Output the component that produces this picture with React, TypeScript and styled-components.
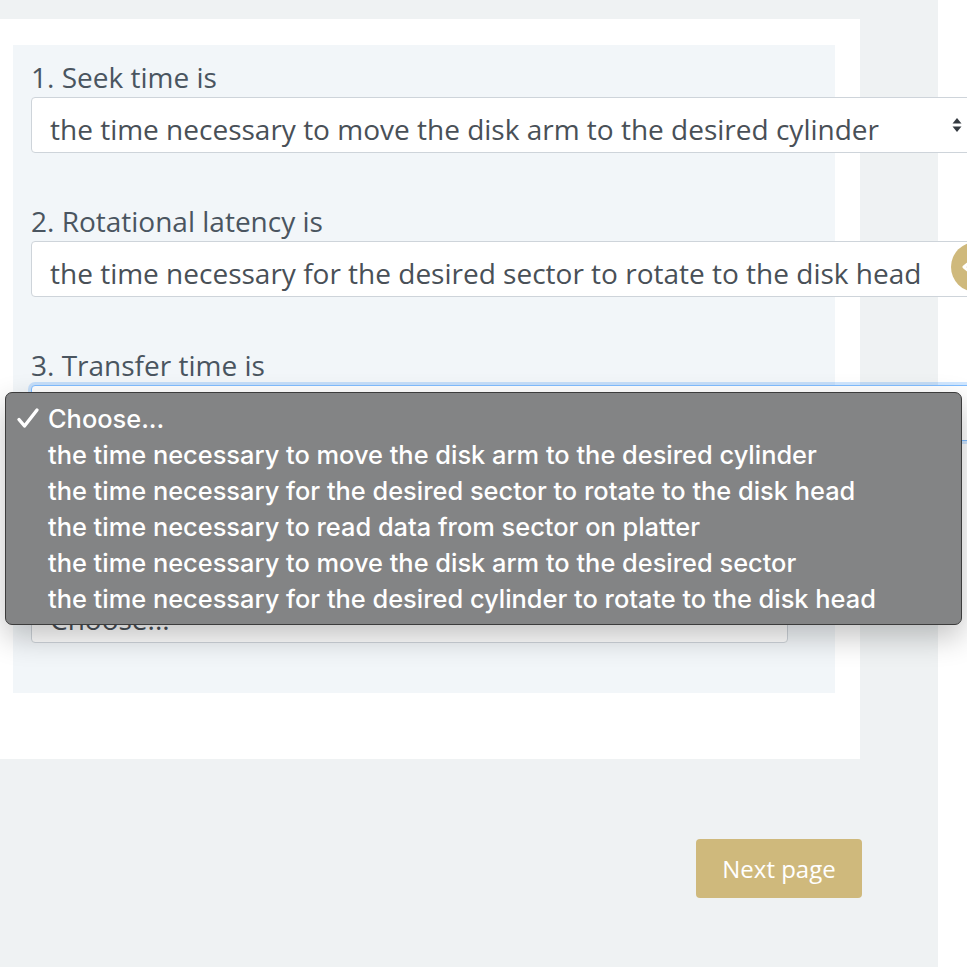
import React from "react";
import styled, { createGlobalStyle } from "styled-components";

const GlobalStyle = createGlobalStyle`
  html, body {
    margin: 0;
    padding: 0;
    background: #ffffff;
  }
  * {
    box-sizing: border-box;
  }
`;

const questions = [
  {
    label: "1. Seek time is",
    value: "the time necessary to move the disk arm to the desired cylinder",
  },
  {
    label: "2. Rotational latency is",
    value: "the time necessary for the desired sector to rotate to the disk head",
  },
  {
    label: "3. Transfer time is",
    value: "Choose...",
    focused: true,
  },
];

const options = [
  "Choose...",
  "the time necessary to move the disk arm to the desired cylinder",
  "the time necessary for the desired sector to rotate to the disk head",
  "the time necessary to read data from sector on platter",
  "the time necessary to move the disk arm to the desired sector",
  "the time necessary for the desired cylinder to rotate to the disk head",
];

const Arrows = () => (
  <svg width="10" height="16" viewBox="0 0 10 16">
    <path d="M5 1 L9.5 6.5 L0.5 6.5 Z" fill="#343a40" />
    <path d="M5 15 L9.5 9.5 L0.5 9.5 Z" fill="#343a40" />
  </svg>
);

const Check = () => (
  <svg width="24" height="24" viewBox="0 0 24 24">
    <path
      d="M3 13.5 L8.5 20 L21 4"
      fill="none"
      stroke="#ffffff"
      strokeWidth="3.4"
      strokeLinecap="round"
      strokeLinejoin="round"
    />
  </svg>
);

const App = () => {
  return (
    <>
      <GlobalStyle />
      <Screen>
        <Main>
          <Card>
            <Panel>
              {questions.map((q) => (
                <Group key={q.label}>
                  <Label>{q.label}</Label>
                  <SelectBox $width={950} $focused={q.focused}>
                    <span>{q.value}</span>
                    <Arrows />
                  </SelectBox>
                </Group>
              ))}
              <Group $extra={58}>
                <Label>4. Access time is</Label>
                <SelectBox $width={757}>
                  <span>Choose...</span>
                  <Arrows />
                </SelectBox>
              </Group>
            </Panel>
          </Card>
          <Actions>
            <NextButton>Next page</NextButton>
          </Actions>
        </Main>

        <Dropdown>
          {options.map((o, i) => (
            <Option key={o}>
              <CheckSlot>{i === 0 && <Check />}</CheckSlot>
              {o}
            </Option>
          ))}
        </Dropdown>

        <ToggleBubble>
          <svg width="20" height="20" viewBox="0 0 20 20">
            <path
              d="M14 4 L7 10 L14 16"
              fill="none"
              stroke="#ffffff"
              strokeWidth="3"
              strokeLinecap="round"
              strokeLinejoin="round"
            />
          </svg>
        </ToggleBubble>
      </Screen>
    </>
  );
};

export default App;

const Screen = styled.div`
  position: relative;
  width: 967px;
  height: 967px;
  overflow: hidden;
  background: #ffffff;
  font-family: "Open Sans", "Liberation Sans", sans-serif;
`;

const Main = styled.div`
  width: 938px;
  height: 967px;
  background: #eff2f3;
  padding-top: 19px;
`;

const Card = styled.div`
  width: 860px;
  background: #ffffff;
  padding: 26px 25px 66px 13px;
`;

const Panel = styled.div`
  display: flex;
  flex-direction: column;
  gap: 46px;
  background: #f2f6f9;
  padding: 10px 0 0 18px;
  height: 648px;
`;

const Group = styled.div<{ $extra?: number }>`
  display: flex;
  flex-direction: column;
  margin-top: ${(p) => p.$extra ?? 0}px;
`;

const Label = styled.label`
  font-size: 28px;
  line-height: 44px;
  color: #4a5560;
  margin-bottom: -2px;
`;

const SelectBox = styled.div<{ $width: number; $focused?: boolean }>`
  display: flex;
  align-items: center;
  justify-content: space-between;
  flex: none;
  width: ${(p) => p.$width}px;
  height: 56px;
  padding: 0 18px 0 18px;
  background: #ffffff;
  border: 1px solid ${(p) => (p.$focused ? "#80bdff" : "#ced4da")};
  border-radius: 4px;
  box-shadow: ${(p) =>
    p.$focused ? "0 0 0 3px rgba(0, 123, 255, 0.18)" : "none"};
  color: #495057;
  font-size: 28px;
  span {
    white-space: nowrap;
    margin-top: 8px;
  }
`;

const Actions = styled.div`
  width: 862px;
  display: flex;
  justify-content: flex-end;
  margin-top: 80px;
`;

const NextButton = styled.button`
  width: 166px;
  height: 59px;
  border: none;
  border-radius: 4px;
  background: #cfb97c;
  color: #ffffff;
  font-family: "Open Sans", "Liberation Sans", sans-serif;
  font-size: 24px;
`;

const Dropdown = styled.div`
  position: absolute;
  left: 5px;
  top: 392px;
  width: 957px;
  height: 233px;
  padding: 7px 0 10px 10px;
  background: #838485;
  border: 1px solid #3c3c3c;
  border-radius: 7px;
  box-shadow: 0 12px 30px rgba(0, 0, 0, 0.24);
  font-family: Inter, "Noto Sans", sans-serif;
  color: #ffffff;
  font-size: 25.4px;
  font-weight: 500;
`;

const Option = styled.div`
  display: flex;
  align-items: center;
  height: 36px;
  white-space: nowrap;
`;

const CheckSlot = styled.span`
  display: inline-flex;
  width: 32px;
  justify-content: flex-start;
`;

const ToggleBubble = styled.div`
  position: absolute;
  left: 951px;
  top: 242px;
  width: 50px;
  height: 50px;
  border-radius: 50%;
  background: #cfb97c;
  display: flex;
  align-items: center;
  padding-left: 6px;
`;
